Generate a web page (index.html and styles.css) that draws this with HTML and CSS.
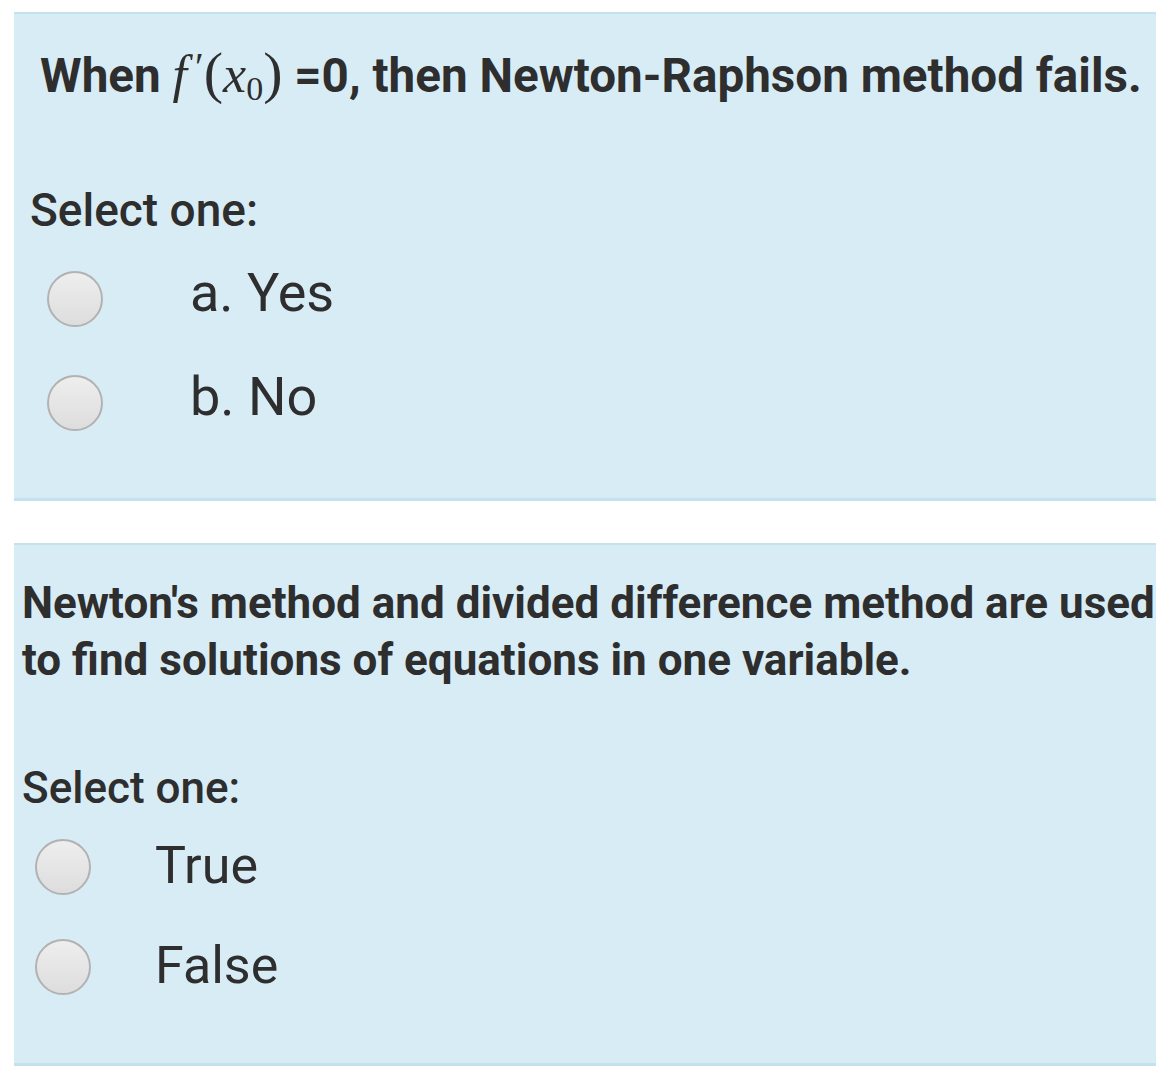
FILE: index.html
```html
<!DOCTYPE html>
<html lang="en">
<head>
<meta charset="utf-8">
<title>Quiz</title>
<link rel="stylesheet" href="styles.css">
</head>
<body>
<div class="page">
  <div class="que q1">
    <div class="qtext">When <span class="math"><span class="mi f">f</span><span class="prime">′</span><span class="paren">(</span><span class="mi x">x</span><span class="sub">0</span><span class="paren">)</span></span> =0, then Newton-Raphson method fails.</div>
    <div class="prompt">Select one:</div>
    <div class="answer">
      <div class="opt"><span class="radio"></span><span class="lbl">a. Yes</span></div>
      <div class="opt"><span class="radio"></span><span class="lbl">b. No</span></div>
    </div>
  </div>
  <div class="que q2">
    <div class="qtext">Newton's method and divided difference method are used<br>to find solutions of equations in one variable.</div>
    <div class="prompt">Select one:</div>
    <div class="answer">
      <div class="opt"><span class="radio"></span><span class="lbl">True</span></div>
      <div class="opt"><span class="radio"></span><span class="lbl">False</span></div>
    </div>
  </div>
</div>
</body>
</html>
```

FILE: styles.css
```css
html, body {
  margin: 0;
  padding: 0;
  background: #ffffff;
}
body {
  font-family: Roboto, "Liberation Sans", sans-serif;
  color: #2e2e2e;
}
.page {
  padding: 12px 20px 0 14px;
  display: flex;
  flex-direction: column;
  gap: 42px;
}
.que {
  background: #d8ecf6;
  border-top: 2px solid #c4e2ee;
  border-bottom: 3px solid #c4e2ee;
  box-sizing: border-box;
  overflow: hidden;
}
.q1 {
  height: 489px;
  padding: 26px 0 0 26px;
}
.q2 {
  height: 523px;
  padding: 30px 0 0 8px;
}
.qtext {
  font-weight: 700;
  font-size: 47.6px;
  line-height: 54px;
  white-space: nowrap;
}
.q2 .qtext {
  font-size: 44px;
  line-height: 57px;
}
.math {
  font-family: "Liberation Serif", "DejaVu Serif", serif;
  font-weight: 400;
  font-size: 52px;
}
.mi {
  font-style: italic;
}
.prime {
  font-size: 40px;
  vertical-align: 12px;
  margin: 0 0 0 8px;
}
.paren {
  font-size: 58px;
}
.sub {
  font-size: 34px;
  vertical-align: -8px;
}
.prompt {
  font-weight: 500;
  font-size: 46px;
  line-height: 54px;
}
.q1 .prompt {
  margin: 67px 0 0 -10px;
}
.q2 .prompt {
  font-size: 44px;
  margin-top: 72px;
}
.answer {
  display: flex;
  flex-direction: column;
  margin-top: 4px;
}
.q2 .answer {
  margin-top: 1px;
}
.opt {
  display: flex;
  align-items: center;
  height: 104px;
}
.q2 .opt {
  height: 100px;
}
.radio {
  width: 52px;
  height: 52px;
  border: 2px solid #b2b2b2;
  border-radius: 50%;
  background: linear-gradient(#eeeeee, #dddddd);
  flex: none;
  margin-top: 12px;
}
.q1 .radio {
  margin-left: 7px;
}
.q2 .radio {
  margin-left: 13px;
  margin-top: 2px;
}
.lbl {
  font-size: 54px;
  line-height: 60px;
  font-weight: 400;
}
.q1 .lbl {
  margin-left: 87px;
}
.q2 .lbl {
  font-size: 52px;
  margin-left: 64px;
}
```
